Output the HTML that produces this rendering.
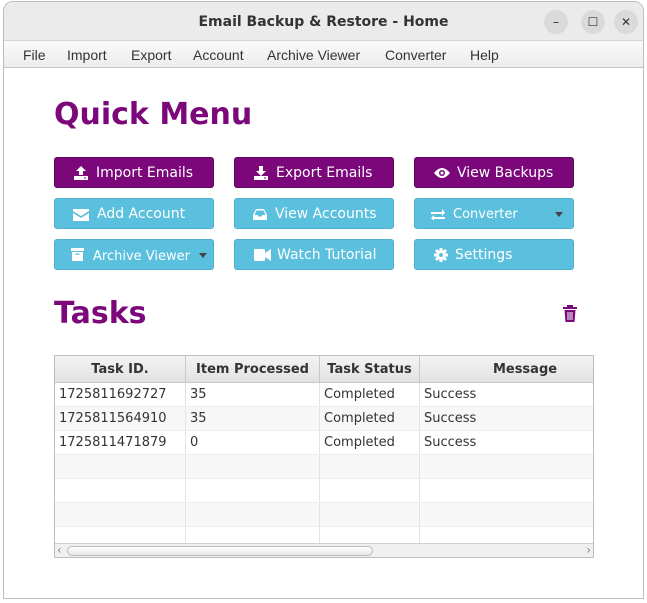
<!DOCTYPE html>
<html><head><meta charset="utf-8"><style>
*{box-sizing:border-box;margin:0;padding:0}
body{width:647px;height:603px;background:#fff;font-family:"DejaVu Sans",sans-serif;overflow:hidden;position:relative}
.win{position:absolute;left:3px;top:1px;width:641px;height:598px;border:1px solid #bdbdbd;border-radius:10px 10px 0 0;overflow:hidden;background:#fff}
.title{position:absolute;left:0;top:0;width:100%;height:39px;background:#ebebeb;border-bottom:1px solid #d6d6d6;text-align:center;font:bold 14px "DejaVu Sans",sans-serif;color:#333;line-height:40px}
.wb{position:absolute;top:8px;width:24px;height:24px;border-radius:12px;background:#dadada;color:#333;font-size:12px;line-height:24px;text-align:center}
.menu{position:absolute;left:0;top:39px;width:100%;height:27px;background:linear-gradient(#fafafa,#ececec);border-bottom:1px solid #c4c4c4;font:14px "Liberation Sans",sans-serif;color:#333}
.menu span{position:absolute;top:6px}
h1{position:absolute;font:bold 30px "DejaVu Sans",sans-serif;color:#7b077b}
.btn{position:absolute;width:160px;height:31px;border-radius:3px;color:#fff;font-size:14px;line-height:30px;text-align:left}
.btn svg{position:absolute;top:8px}
.btn span{position:absolute;top:0}
.p{background:#7b077b;border:1px solid #5e055e}
.b{background:#5bc0de;border:1px solid #4fb0cc}
.car{position:absolute;right:10px;top:13px;border:4px solid transparent;border-top:5px solid #444}
.tbl{position:absolute;left:54px;top:355px;width:540px;height:203px;border:1px solid #bdbdbd;overflow:hidden;font-size:13px;color:#333}
.row{position:absolute;left:0;width:100%;height:24px;border-bottom:1px solid #eee}
.c{position:absolute;top:0;height:100%;border-right:1px solid #e3e3e3;padding-left:4px;line-height:23px}
.hd{background:linear-gradient(#f4f4f4,#e2e2e2);height:27px;border-bottom:1px solid #c8c8c8;font-weight:bold}
.hd .c{text-align:center;padding:0;line-height:27px;border-right:1px solid #c8c8c8}
</style></head><body>
<div class="win">
<div class="title">Email Backup &amp; Restore - Home</div>
<div class="wb" style="left:540px">–</div><div class="wb" style="left:577px">☐</div><div class="wb" style="left:610px">✕</div>
<div class="menu"><span style="left:19px">File</span><span style="left:63px">Import</span><span style="left:127px">Export</span><span style="left:189px">Account</span><span style="left:263px">Archive Viewer</span><span style="left:381px">Converter</span><span style="left:466px">Help</span></div>
</div>
<h1 style="left:54px;top:97px">Quick Menu</h1>
<div class="btn p" style="left:54px;top:157px"><svg style="left:19px" width="14" height="14" viewBox="0 0 14 14"><path d="M7 0L2 5h3v4h4V5h3z M0 10h14v4H0z" fill="#fff"/><rect x="10" y="11.5" width="2" height="1" fill="#7b077b"/></svg><span style="left:41px">Import Emails</span></div>
<div class="btn p" style="left:234px;top:157px"><svg style="left:19px" width="14" height="14" viewBox="0 0 14 14"><path d="M5 0h4v5h3L7 10 2 5h3z M0 10h14v4H0z" fill="#fff"/><rect x="10" y="11.5" width="2" height="1" fill="#7b077b"/></svg><span style="left:41px">Export Emails</span></div>
<div class="btn p" style="left:414px;top:157px"><svg style="left:19px;top:9px" width="16" height="12" viewBox="0 0 16 12"><path d="M0 6Q8-4 16 6Q8 16 0 6z" fill="#fff"/><circle cx="8" cy="6" r="3" fill="#7b077b"/><circle cx="8" cy="6" r="1.5" fill="#fff"/></svg><span style="left:42px">View Backups</span></div>
<div class="btn b" style="left:54px;top:198px"><svg style="left:18px;top:10px" width="16" height="12" viewBox="0 0 16 12"><path d="M0 0h16v2L8 7 0 2z M0 4l8 5 8-5v8H0z" fill="#fff"/></svg><span style="left:42px">Add Account</span></div>
<div class="btn b" style="left:234px;top:198px"><svg style="left:18px;top:10px" width="14" height="11" viewBox="0 0 14 11"><path d="M3 0h8l3 6v5H0V6z" fill="#fff"/><path d="M3.5 1.5h7l2 4.5h-3l-1 1.5h-3l-1-1.5h-3z" fill="#5bc0de"/></svg><span style="left:40px">View Accounts</span></div>
<div class="btn b" style="left:414px;top:198px;font-size:13px"><svg style="left:16px;top:10px" width="14" height="11" viewBox="0 0 14 11"><path d="M0 3h11V0l3 3.5-3 3.5V5H0z M14 8H3V6L0 9l3 3V10h11z" fill="#fff"/></svg><span style="left:38px;top:1px">Converter</span><i class="car"></i></div>
<div class="btn b" style="left:54px;top:239px;font-size:13px"><svg style="left:16px;top:8px" width="13" height="13" viewBox="0 0 13 13"><rect x="0" y="0" width="13" height="3" fill="#fff"/><rect x="1" y="4" width="11" height="9" fill="#fff"/><rect x="4.5" y="5.5" width="4" height="1.3" fill="#5bc0de"/></svg><span style="left:38px;top:2px">Archive Viewer</span><i class="car" style="right:6px"></i></div>
<div class="btn b" style="left:234px;top:239px"><svg style="left:19px;top:9px" width="17" height="12" viewBox="0 0 17 12"><rect x="0" y="0" width="11" height="12" rx="1.5" fill="#fff"/><path d="M11 4l6-4v12l-6-4z" fill="#fff"/></svg><span style="left:42px">Watch Tutorial</span></div>
<div class="btn b" style="left:414px;top:239px"><svg style="left:19px;top:8px" width="14" height="14" viewBox="0 0 14 14"><circle cx="7" cy="7" r="5" fill="#fff"/><path d="M7 0v14M0 7h14M2 2l10 10M12 2L2 12" stroke="#fff" stroke-width="3"/><circle cx="7" cy="7" r="2" fill="#5bc0de"/></svg><span style="left:40px">Settings</span></div>
<h1 style="left:54px;top:296px">Tasks</h1>
<svg style="position:absolute;left:563px;top:305px" width="14" height="17" viewBox="0 0 14 17"><rect x="0" y="2" width="14" height="2" fill="#7b077b"/><rect x="4" y="0" width="6" height="3" fill="#7b077b"/><path d="M1.5 5h11l-1 12h-9z" fill="#7b077b"/><path d="M5 7v8M7 7v8M9 7v8" stroke="#fff" stroke-width="1"/></svg>
<div class="tbl">
<div class="row hd" style="top:0"><div class="c" style="left:0;width:131px">Task ID.</div><div class="c" style="left:131px;width:134px">Item Processed</div><div class="c" style="left:265px;width:100px">Task Status</div><div class="c" style="left:365px;width:210px;border:0">Message</div></div>
<div class="row" style="top:27px"><div class="c" style="left:0;width:131px">1725811692727</div><div class="c" style="left:131px;width:134px">35</div><div class="c" style="left:265px;width:100px">Completed</div><div class="c" style="left:365px;border:0">Success</div></div>
<div class="row" style="top:51px;background:#f7f7f7"><div class="c" style="left:0;width:131px">1725811564910</div><div class="c" style="left:131px;width:134px">35</div><div class="c" style="left:265px;width:100px">Completed</div><div class="c" style="left:365px;border:0">Success</div></div>
<div class="row" style="top:75px"><div class="c" style="left:0;width:131px">1725811471879</div><div class="c" style="left:131px;width:134px">0</div><div class="c" style="left:265px;width:100px">Completed</div><div class="c" style="left:365px;border:0">Success</div></div>
<div class="row" style="top:99px;background:#f7f7f7"><div class="c" style="left:0;width:131px"></div><div class="c" style="left:131px;width:134px"></div><div class="c" style="left:265px;width:100px"></div></div>
<div class="row" style="top:123px"><div class="c" style="left:0;width:131px"></div><div class="c" style="left:131px;width:134px"></div><div class="c" style="left:265px;width:100px"></div></div>
<div class="row" style="top:147px;background:#f7f7f7"><div class="c" style="left:0;width:131px"></div><div class="c" style="left:131px;width:134px"></div><div class="c" style="left:265px;width:100px"></div></div>
<div class="row" style="top:171px"><div class="c" style="left:0;width:131px"></div><div class="c" style="left:131px;width:134px"></div><div class="c" style="left:265px;width:100px"></div></div>
<div style="position:absolute;left:0;top:187px;width:100%;height:15px;background:#f0f0f0;border-top:1px solid #d0d0d0;font-size:12px;color:#888">
<span style="position:absolute;left:2px;top:-1px">‹</span><span style="position:absolute;right:2px;top:-1px">›</span>
<div style="position:absolute;left:12px;top:2px;width:306px;height:10px;border:1px solid #bbb;border-radius:5px;background:linear-gradient(#fff,#e6e6e6)"></div></div>
</div>
</body></html>
